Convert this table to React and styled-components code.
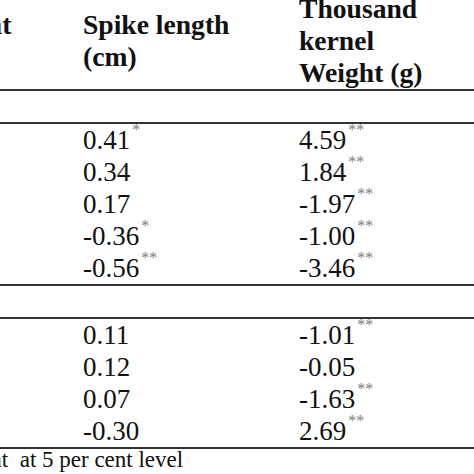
import React from "react";
import styled, { createGlobalStyle } from "styled-components";

const GlobalStyle = createGlobalStyle`
  html, body {
    margin: 0;
    padding: 0;
    background: #ffffff;
    overflow: hidden;
  }
`;

const Page = styled.div`
  width: 474px;
  height: 474px;
  overflow: hidden;
  background: #ffffff;
  color: #111111;
  font-family: "Liberation Serif", "Times New Roman", serif;
`;

const Sheet = styled.div`
  width: 640px;
  margin-left: -132px;
  margin-top: -7px;
`;

const Table = styled.table`
  width: 620px;
  border-collapse: separate;
  border-spacing: 0;
  table-layout: fixed;
  font-size: 27px;
  line-height: 32px;
`;

const Row = styled.tr`
  & > td,
  & > th {
    border-bottom: ${({ $rule }) => ($rule ? "2px solid #333333" : "none")};
  }
`;

const HeadCell = styled.th`
  font-size: 27.6px;
  font-weight: bold;
  text-align: left;
  vertical-align: middle;
  padding: 0 0 0 ${({ $indent }) => $indent}px;
`;

const Cell = styled.td`
  padding: 0 0 0 ${({ $indent }) => $indent}px;
  white-space: nowrap;
  height: ${({ $gap }) => ($gap ? "31px" : "auto")};
`;

const Star = styled.span`
  font-size: 16px;
  color: #7e7e7e;
  line-height: 0;
  vertical-align: 14px;
  margin-left: 2px;
`;

const Footnote = styled.p`
  margin: 0;
  padding-left: 22px;
  font-size: 23px;
  line-height: 22px;
  white-space: pre;
`;

const indents = [0, 15, 14];

const sections = [
  {
    label: "Timely sown",
    rows: [
      ["", ["0.41", "*"], ["4.59", "**"]],
      ["", ["0.34", ""], ["1.84", "**"]],
      ["", ["0.17", ""], ["-1.97", "**"]],
      ["", ["-0.36", "*"], ["-1.00", "**"]],
      ["", ["-0.56", "**"], ["-3.46", "**"]],
    ],
  },
  {
    label: "Late sown",
    rows: [
      ["", ["0.11", ""], ["-1.01", "**"]],
      ["", ["0.12", ""], ["-0.05", ""]],
      ["", ["0.07", ""], ["-1.63", "**"]],
      ["", ["-0.30", ""], ["2.69", "**"]],
    ],
  },
];

const Value = ({ value }) =>
  Array.isArray(value) ? (
    <>
      {value[0]}
      {value[1] && <Star>{value[1]}</Star>}
    </>
  ) : (
    value
  );

export default function App() {
  return (
    <Page>
      <GlobalStyle />
      <Sheet>
        <Table>
          <colgroup>
            <col style={{ width: 200 }} />
            <col style={{ width: 217 }} />
            <col style={{ width: 203 }} />
          </colgroup>
          <thead>
            <Row $rule>
              <HeadCell $indent={indents[0]}>
                Plant height
                <br />
                (cm)
              </HeadCell>
              <HeadCell $indent={indents[1]}>
                Spike length
                <br />
                (cm)
              </HeadCell>
              <HeadCell $indent={indents[2]}>
                Thousand
                <br />
                kernel
                <br />
                Weight (g)
              </HeadCell>
            </Row>
          </thead>
          {sections.map((section) => (
            <tbody key={section.label}>
              <Row $rule>
                <Cell $gap $indent={indents[0]} />
                <Cell $gap $indent={indents[1]} />
                <Cell $gap $indent={indents[2]} />
              </Row>
              {section.rows.map((row, i) => (
                <Row key={i} $rule={i === section.rows.length - 1}>
                  {row.map((value, j) => (
                    <Cell key={j} $indent={indents[j]}>
                      <Value value={value} />
                    </Cell>
                  ))}
                </Row>
              ))}
            </tbody>
          ))}
        </Table>
        <Footnote>{"* Significant  at 5 per cent level"}</Footnote>
      </Sheet>
    </Page>
  );
}
